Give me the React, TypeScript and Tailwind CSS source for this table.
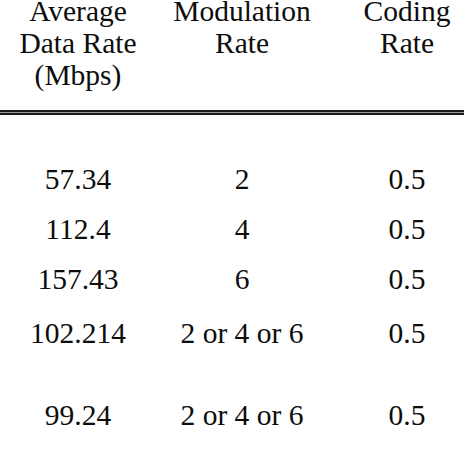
const ROWS = [
  { rate: '57.34', mod: '2', coding: '0.5', extra: '' },
  { rate: '112.4', mod: '4', coding: '0.5', extra: '' },
  { rate: '157.43', mod: '6', coding: '0.5', extra: '' },
  { rate: '102.214', mod: '2 or 4 or 6', coding: '0.5', extra: 'mt-[4px]' },
  { rate: '99.24', mod: '2 or 4 or 6', coding: '0.5', extra: 'mt-[32px]' },
]

export default function App() {
  return (
    <div className="h-[464px] w-[464px] overflow-hidden bg-white text-[#0d0d0d] font-['Liberation_Serif',serif] text-[29.5px]">
      <div className="w-[486px]">
        <div className="mt-[-5px] grid grid-cols-[156px_172px_158px] text-center leading-[32px]">
          <div>Average<br />Data Rate<br />(Mbps)</div>
          <div>Modulation<br />Rate</div>
          <div>Coding<br />Rate</div>
        </div>
        <div className="mt-[19px] flex w-[464px] flex-col">
          <div className="h-[2px] bg-[#1a1a1a]" />
          <div className="h-px bg-[#9a9a9a]" />
          <div className="h-[2px] bg-[#1a1a1a]" />
        </div>
        <div className="pt-[39px]">
          {ROWS.map((r) => (
            <div key={r.rate} className={`grid grid-cols-[156px_172px_158px] text-center leading-[50px] ${r.extra}`}>
              <div>{r.rate}</div>
              <div>{r.mod}</div>
              <div>{r.coding}</div>
            </div>
          ))}
        </div>
      </div>
    </div>
  )
}
